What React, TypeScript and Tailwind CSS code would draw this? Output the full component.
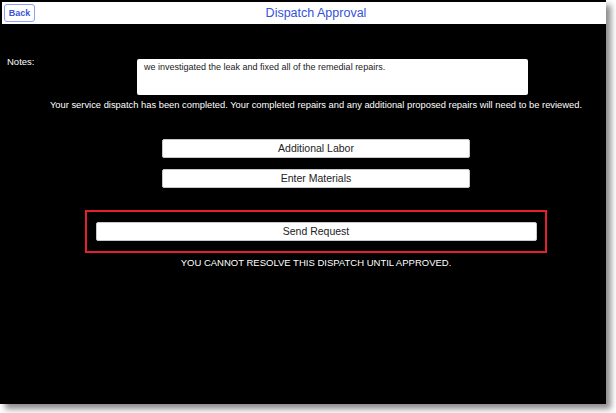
import React from 'react';

const font = { fontFamily: '"Liberation Sans", Arial, sans-serif' };

function WideButton({ label, width }: { label: string; width: string }) {
  return (
    <button
      className={`${width} h-[19px] bg-white rounded-[2px] border border-[#c8c8c8] text-[10.5px] text-[#222] leading-none`}
    >
      {label}
    </button>
  );
}

export default function App() {
  return (
    <div className="w-[616px] h-[413px] bg-white" style={font}>
      {/* main panel, cropped from a wider page */}
      <div className="w-[606px] h-[404px] bg-black overflow-hidden shadow-[5px_5px_6px_rgba(0,0,0,0.45)]">
        <div className="w-[632px] flex flex-col">
          {/* header */}
          <div className="mx-[2px] mt-[2px] h-[22px] bg-white flex items-center relative">
            <button className="absolute left-[2px] top-[2px] w-[31px] h-[18px] rounded-[3px] border-[1.5px] border-[#8ea0f2] text-[9px] font-bold text-[#3a55d8] leading-none">
              Back
            </button>
            <div className="flex-1 text-center text-[12.5px] text-[#3352e0]">Dispatch Approval</div>
          </div>

          {/* notes */}
          <div className="flex mt-[35px]">
            <div className="w-[137px] pl-[7px] -mt-[2px] text-[9.5px] text-white leading-none">Notes:</div>
            <div className="w-[391px] h-[36px] bg-white rounded-[2px] px-[7px] pt-[3px] text-[9px] text-[#222] leading-tight">
              we investigated the leak and fixed all of the remedial repairs.
            </div>
          </div>
          <div className="mt-[3px] text-center text-[9.35px] text-white leading-[14px]">
            Your service dispatch has been completed. Your completed repairs and any additional proposed repairs will need to be reviewed.
          </div>

          {/* actions */}
          <div className="mt-[27px] flex flex-col items-center gap-[11px]">
            <WideButton label="Additional Labor" width="w-[308px]" />
            <WideButton label="Enter Materials" width="w-[308px]" />
          </div>

          <div className="mt-[22px] mx-auto w-[462px] h-[43px] border-2 border-[#e3202b] flex items-center justify-center">
            <WideButton label="Send Request" width="w-[441px]" />
          </div>

          <div className="mt-[3px] text-center text-[9.5px] text-white leading-[14px]">
            YOU CANNOT RESOLVE THIS DISPATCH UNTIL APPROVED.
          </div>
        </div>
      </div>
    </div>
  );
}
